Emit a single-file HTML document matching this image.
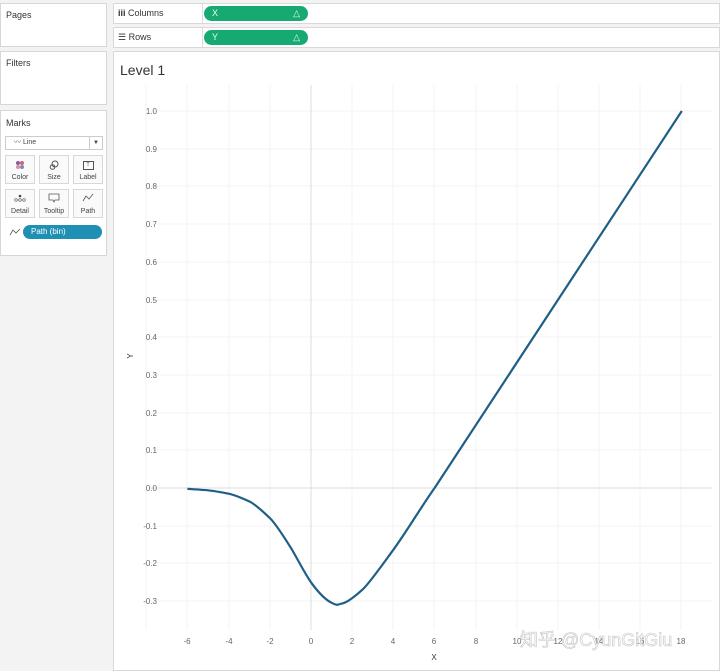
<!DOCTYPE html>
<html><head><meta charset="utf-8"><style>
body{margin:0;width:720px;height:671px;background:#f3f3f3;font-family:"Liberation Sans",sans-serif;position:relative;overflow:hidden}
.box{position:absolute;left:0;width:107px;background:#fff;border:1px solid #d6d6d6;box-sizing:border-box}
.t{font-size:9px;color:#333;position:absolute;left:5px;top:6px}
.shelf{position:absolute;left:113px;width:607px;height:21px;background:#fff;border:1px solid #d8d8d8;box-sizing:border-box;font-size:9px;color:#333}
.pill{position:absolute;left:90px;top:2px;width:104px;height:15px;border-radius:8px;background:#16a971;color:#e8fff4;font-size:9px;line-height:15px}
.card{position:absolute;width:30px;height:29px;border:1px solid #d8d8d8;background:#fafafa;box-sizing:border-box;font-size:7px;color:#444;text-align:center}
.card span{position:absolute;bottom:2px;left:0;right:0}
</style></head><body>
<div class="box" style="top:3px;height:44px"><div class="t">Pages</div></div>
<div class="box" style="top:51px;height:54px"><div class="t">Filters</div></div>
<div class="box" style="top:110px;height:146px"><div class="t" style="top:7px">Marks</div>
<div style="position:absolute;left:4px;top:25px;width:98px;height:14px;border:1px solid #ccc;box-sizing:border-box;font-size:7px;color:#444;line-height:12px;padding-left:8px">〰 Line<span style="position:absolute;right:0;top:0;width:12px;border-left:1px solid #ccc;text-align:center;font-size:6px">▼</span></div>
<div class="card" style="left:4px;top:44px"><svg width="10" height="10" style="margin-top:4px"><circle cx="3" cy="3" r="2" fill="#8a5a9a"/><circle cx="7" cy="3" r="2" fill="#d0607a"/><circle cx="3" cy="7" r="2" fill="#d88fa0"/><circle cx="7" cy="7" r="2" fill="#7a8fb0"/></svg><span>Color</span></div>
<div class="card" style="left:38px;top:44px"><svg width="10" height="10" style="margin-top:4px"><circle cx="6" cy="4" r="3" fill="none" stroke="#555"/><circle cx="3.5" cy="7" r="2.3" fill="none" stroke="#555"/></svg><span>Size</span></div>
<div class="card" style="left:72px;top:44px"><div style="margin:5px auto 0;width:9px;height:7px;border:1px solid #555;font-size:5px;line-height:7px">T</div><span>Label</span></div>
<div class="card" style="left:4px;top:78px"><svg width="12" height="10" style="margin-top:3px"><circle cx="6" cy="3" r="1.3" fill="#444"/><circle cx="2" cy="7" r="1.3" fill="none" stroke="#555" stroke-width=".7"/><circle cx="6" cy="7" r="1.3" fill="none" stroke="#555" stroke-width=".7"/><circle cx="10" cy="7" r="1.3" fill="none" stroke="#555" stroke-width=".7"/></svg><span>Detail</span></div>
<div class="card" style="left:38px;top:78px"><svg width="12" height="10" style="margin-top:3px"><path d="M1 1H11V7H7L6 9L5 7H1Z" fill="none" stroke="#555" stroke-width=".8"/></svg><span>Tooltip</span></div>
<div class="card" style="left:72px;top:78px"><svg width="12" height="10" style="margin-top:3px"><path d="M1 8L4 3L7 6L11 1" fill="none" stroke="#555" stroke-width=".8"/></svg><span>Path</span></div>
<svg style="position:absolute;left:8px;top:117px" width="12" height="8"><path d="M1 7L4 2L7 5L11 1" fill="none" stroke="#555" stroke-width=".8"/></svg>
<div style="position:absolute;left:22px;top:114px;width:79px;height:14px;border-radius:7px;background:#1f8fb3;color:#fff;font-size:8px;line-height:14px;padding-left:8px;box-sizing:border-box">Path (bin)</div>
</div>
<div class="shelf" style="top:3px"><span style="position:absolute;left:4px;top:4px"><b>iii</b> Columns</span><div style="position:absolute;left:88px;top:0;bottom:0;border-left:1px solid #ddd"></div><div class="pill"><span style="margin-left:8px">X</span><span style="position:absolute;right:8px">△</span></div></div>
<div class="shelf" style="top:27px"><span style="position:absolute;left:4px;top:4px">☰ Rows</span><div style="position:absolute;left:88px;top:0;bottom:0;border-left:1px solid #ddd"></div><div class="pill"><span style="margin-left:8px">Y</span><span style="position:absolute;right:8px">△</span></div></div>
<div style="position:absolute;left:113px;top:51px;width:607px;height:620px;background:#fff;border:1px solid #d8d8d8;box-sizing:border-box"></div>
<svg style="position:absolute;left:0;top:0" width="720" height="671" font-family="Liberation Sans, sans-serif">
<text x="120" y="75" font-size="14" fill="#333">Level 1</text>
<g stroke="#f3f3f3" stroke-width="1">
<line x1="146" y1="85" x2="146" y2="630"/><line x1="187" y1="85" x2="187" y2="630"/><line x1="229" y1="85" x2="229" y2="630"/><line x1="270" y1="85" x2="270" y2="630"/><line x1="352" y1="85" x2="352" y2="630"/><line x1="393" y1="85" x2="393" y2="630"/><line x1="434" y1="85" x2="434" y2="630"/><line x1="476" y1="85" x2="476" y2="630"/><line x1="517" y1="85" x2="517" y2="630"/><line x1="558" y1="85" x2="558" y2="630"/><line x1="599" y1="85" x2="599" y2="630"/><line x1="640" y1="85" x2="640" y2="630"/><line x1="681" y1="85" x2="681" y2="630"/>
<line x1="150" y1="111" x2="712" y2="111"/><line x1="150" y1="149" x2="712" y2="149"/><line x1="150" y1="186" x2="712" y2="186"/><line x1="150" y1="224" x2="712" y2="224"/><line x1="150" y1="262" x2="712" y2="262"/><line x1="150" y1="300" x2="712" y2="300"/><line x1="150" y1="337" x2="712" y2="337"/><line x1="150" y1="375" x2="712" y2="375"/><line x1="150" y1="413" x2="712" y2="413"/><line x1="150" y1="450" x2="712" y2="450"/><line x1="150" y1="526" x2="712" y2="526"/><line x1="150" y1="563" x2="712" y2="563"/><line x1="150" y1="601" x2="712" y2="601"/>
</g>
<line x1="311" y1="85" x2="311" y2="630" stroke="#dcdcdc"/>
<line x1="150" y1="488" x2="712" y2="488" stroke="#dcdcdc"/>
<g font-size="8" fill="#666" text-anchor="end">
<text x="157" y="114">1.0</text><text x="157" y="152">0.9</text><text x="157" y="189">0.8</text><text x="157" y="227">0.7</text><text x="157" y="265">0.6</text><text x="157" y="303">0.5</text><text x="157" y="340">0.4</text><text x="157" y="378">0.3</text><text x="157" y="416">0.2</text><text x="157" y="453">0.1</text><text x="157" y="491">0.0</text><text x="157" y="529">-0.1</text><text x="157" y="566">-0.2</text><text x="157" y="604">-0.3</text>
</g>
<g font-size="8" fill="#666" text-anchor="middle">
<text x="187" y="644">-6</text><text x="229" y="644">-4</text><text x="270" y="644">-2</text><text x="311" y="644">0</text><text x="352" y="644">2</text><text x="393" y="644">4</text><text x="434" y="644">6</text><text x="476" y="644">8</text><text x="517" y="644">10</text><text x="558" y="644">12</text><text x="599" y="644">14</text><text x="640" y="644">16</text><text x="681" y="644">18</text>
<text x="434" y="660" fill="#333">X</text>
<text x="133" y="356" fill="#333" transform="rotate(-90 133 356)">Y</text>
</g>
<path d="M187.4,488.9 C197,489.5 203,489.8 208,490.3 S222,492.4 228.6,493.7 S243,498.6 249.2,501.4 S264,512.5 269.8,518 S285,538.5 290.4,547.1 S305,574 311,582.3 S325,599.5 331.6,602.8 S337,604.5 341.9,603.6 S356,595.5 362.5,589.6 S380,568 393.4,549.7 S423,504 434.6,488 L681.8,111" fill="none" stroke="#1f5f86" stroke-width="2.2" stroke-linejoin="round"/>
<text x="520" y="646" font-size="18" fill="#fff" fill-opacity="0.6" stroke="#c4c4c4" stroke-width="0.6" font-family="Liberation Sans, Noto Sans CJK SC, sans-serif">知乎 @CyunGitGiu</text>
</svg>
</body></html>
